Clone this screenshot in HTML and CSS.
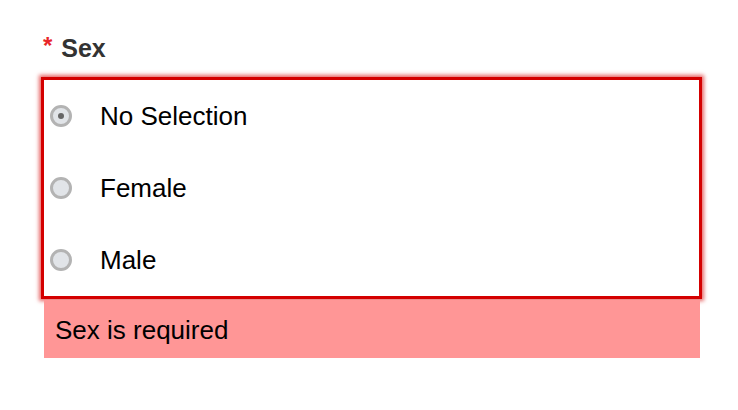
FILE: index.html
```html
<!DOCTYPE html>
<html>
<head>
<meta charset="utf-8">
<link rel="stylesheet" href="styles.css">
</head>
<body>
<div class="field">
  <div class="label"><span class="req">*</span> Sex</div>
  <div class="options">
    <label class="option"><span class="radio checked"></span><span class="text">No Selection</span></label>
    <label class="option"><span class="radio"></span><span class="text">Female</span></label>
    <label class="option"><span class="radio"></span><span class="text">Male</span></label>
  </div>
  <div class="error">Sex is required</div>
</div>
</body>
</html>
```

FILE: styles.css
```css
html, body {
  margin: 0;
  padding: 0;
  background: #fff;
}
body {
  font-family: "Liberation Sans", Arial, sans-serif;
}
.field {
  width: 661px;
  padding: 31px 0 0 41px;
}
.label {
  font-size: 25px;
  line-height: 30px;
  font-weight: bold;
  color: #333;
  margin-bottom: 14px;
  padding-left: 2px;
}
.req {
  color: #e8262a;
  font-size: 24px;
  margin-right: 2px;
  vertical-align: 3px;
}
.options {
  border: 3px solid #d40000;
  box-shadow: 0 0 4px 2px rgba(215, 0, 0, 0.6);
  background: #fff;
  display: flex;
  flex-direction: column;
}
.option {
  height: 72px;
  display: flex;
  align-items: center;
  padding-left: 6px;
}
.radio {
  width: 16px;
  height: 16px;
  border: 3px solid #b3b3b3;
  border-radius: 50%;
  background: #e1e4e8;
  display: flex;
  align-items: center;
  justify-content: center;
  margin-right: 28px;
  flex: none;
}
.radio.checked::after {
  content: "";
  width: 6px;
  height: 6px;
  border-radius: 50%;
  background: #666;
}
.text {
  font-size: 26px;
  color: #000;
  line-height: 30px;
}
.error {
  margin: 1px 2px 0 3px;
  height: 58px;
  background: #ff9696;
  font-size: 26px;
  color: #000;
  display: flex;
  align-items: center;
  padding-left: 11px;
  padding-top: 2px;
  box-sizing: border-box;
}
```
